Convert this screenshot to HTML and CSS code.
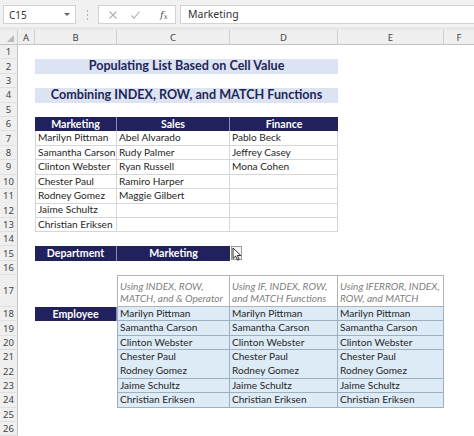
FILE: index.html
```html
<!DOCTYPE html>
<html>
<head>
<meta charset="utf-8">
<link rel="stylesheet" href="styles.css">
</head>
<body>
<div class="formula-bar">
  <div class="namebox"><span class="nb-text">C15</span><span class="caret"></span></div>
  <div class="grip"><i></i><i></i><i></i></div>
  <div class="fx-buttons">
    <svg class="ico" width="10" height="10" viewBox="0 0 10 10"><path d="M1.5 1.5 L8.5 8.5 M8.5 1.5 L1.5 8.5" stroke="#b0b0b0" stroke-width="1.1" fill="none"/></svg>
    <svg class="ico" width="11" height="10" viewBox="0 0 11 10"><path d="M1.5 5.5 L4.2 8.2 L9.5 1.5" stroke="#b0b0b0" stroke-width="1.1" fill="none"/></svg>
    <span class="fx">f<sub>x</sub></span>
  </div>
  <div class="formula-input">Marketing</div>
</div>
<div class="sheet">
  <div class="row colhead">
    <div class="corner"><span class="tri"></span></div>
    <div class="ch">A</div><div class="ch">B</div><div class="ch">C</div><div class="ch">D</div><div class="ch">E</div><div class="ch last">F</div>
  </div>

  <div class="row"><div class="rh">1</div></div>
  <div class="row"><div class="rh">2</div><div class="title span-bd">Populating List Based on Cell Value</div></div>
  <div class="row"><div class="rh">3</div></div>
  <div class="row"><div class="rh">4</div><div class="title span-bd">Combining INDEX, ROW, and MATCH Functions</div></div>
  <div class="row"><div class="rh">5</div></div>
  <div class="row"><div class="rh">6</div><div class="hd b">Marketing</div><div class="hd c">Sales</div><div class="hd d last">Finance</div></div>
  <div class="row"><div class="rh">7</div><div class="t b first">Marilyn Pittman</div><div class="t c">Abel Alvarado</div><div class="t d">Pablo Beck</div></div>
  <div class="row"><div class="rh">8</div><div class="t b first">Samantha Carson</div><div class="t c">Rudy Palmer</div><div class="t d">Jeffrey Casey</div></div>
  <div class="row"><div class="rh">9</div><div class="t b first">Clinton Webster</div><div class="t c">Ryan Russell</div><div class="t d">Mona Cohen</div></div>
  <div class="row"><div class="rh">10</div><div class="t b first">Chester Paul</div><div class="t c">Ramiro Harper</div><div class="t d"></div></div>
  <div class="row"><div class="rh">11</div><div class="t b first">Rodney Gomez</div><div class="t c">Maggie Gilbert</div><div class="t d"></div></div>
  <div class="row"><div class="rh">12</div><div class="t b first">Jaime Schultz</div><div class="t c"></div><div class="t d"></div></div>
  <div class="row"><div class="rh">13</div><div class="t b first">Christian Eriksen</div><div class="t c"></div><div class="t d"></div></div>
  <div class="row"><div class="rh">14</div></div>
  <div class="row"><div class="rh">15</div><div class="hd b">Department</div><div class="hd c last">Marketing</div>
    <div class="d dd-cell">
      <span class="dd-btn"></span>
      <svg class="cursor" width="10" height="14" viewBox="0 0 10 14"><path d="M1 1 L1 11.5 L3.6 9.2 L5.6 13.2 L7.2 12.4 L5.3 8.5 L8.8 8.5 Z" fill="#fff" stroke="#111" stroke-width="0.9" stroke-linejoin="round"/></svg>
    </div>
  </div>
  <div class="row"><div class="rh">16</div></div>
  <div class="row tall"><div class="rh">17</div>
    <div class="h17 c first">Using INDEX, ROW,<br>MATCH, and &amp; Operator</div>
    <div class="h17 d">Using IF, INDEX, ROW,<br>and MATCH Functions</div>
    <div class="h17 e">Using IFERROR, INDEX,<br>ROW, and MATCH</div>
  </div>
  <div class="row"><div class="rh">18</div><div class="hd b">Employee</div><div class="r c first">Marilyn Pittman</div><div class="r d">Marilyn Pittman</div><div class="r e">Marilyn Pittman</div></div>
  <div class="row"><div class="rh">19</div><div class="r c first">Samantha Carson</div><div class="r d">Samantha Carson</div><div class="r e">Samantha Carson</div></div>
  <div class="row"><div class="rh">20</div><div class="r c first">Clinton Webster</div><div class="r d">Clinton Webster</div><div class="r e">Clinton Webster</div></div>
  <div class="row"><div class="rh">21</div><div class="r c first">Chester Paul</div><div class="r d">Chester Paul</div><div class="r e">Chester Paul</div></div>
  <div class="row"><div class="rh">22</div><div class="r c first">Rodney Gomez</div><div class="r d">Rodney Gomez</div><div class="r e">Rodney Gomez</div></div>
  <div class="row"><div class="rh">23</div><div class="r c first">Jaime Schultz</div><div class="r d">Jaime Schultz</div><div class="r e">Jaime Schultz</div></div>
  <div class="row"><div class="rh">24</div><div class="r c first">Christian Eriksen</div><div class="r d">Christian Eriksen</div><div class="r e">Christian Eriksen</div></div>
  <div class="row"><div class="rh">25</div></div>
  <div class="row"><div class="rh">26</div></div>
</div>
</body>
</html>
```

FILE: styles.css
```css
* { box-sizing: border-box; }
html, body { margin: 0; padding: 0; background: #fff; }
body {
  width: 474px; height: 436px; overflow: hidden;
  font-family: Lato, "Noto Sans", sans-serif;
  color: #262626;
}

/* formula bar */
.formula-bar {
  height: 30px;
  background: #f1f1f1;
  display: flex;
  align-items: flex-start;
  padding: 5px 0 0 3px;
  border-bottom: 3px solid #e8e8e8;
}
.namebox {
  width: 73px; height: 19px;
  background: #fff;
  border: 1px solid #d2d2d2;
  display: flex; align-items: center; justify-content: space-between;
  padding: 0 5px 0 5px;
  font-family: "Noto Sans", sans-serif;
  font-size: 10px; color: #333;
}
.caret {
  width: 0; height: 0;
  border-left: 3px solid transparent;
  border-right: 3px solid transparent;
  border-top: 3px solid #666;
}
.grip {
  width: 22px; height: 19px;
  display: flex; flex-direction: column; align-items: center; justify-content: center; gap: 2px;
}
.grip i { display: block; width: 1px; height: 2px; background: #b5b5b5; }
.fx-buttons {
  width: 78px; height: 19px;
  background: #fff;
  border: 1px solid #d2d2d2;
  display: flex; align-items: center;
  padding: 0 0 0 9px;
  gap: 12px;
}
.fx {
  font-family: "DejaVu Serif", "Liberation Serif", serif;
  font-style: italic; font-size: 10px; color: #555;
  margin-left: 7px;
}
.fx sub { font-size: 7px; vertical-align: -1px; }
.formula-input {
  flex: 1; height: 19px; margin-left: 4px;
  background: #fff;
  border: 1px solid #d2d2d2; border-right: none;
  font-family: "Noto Sans", sans-serif;
  font-size: 10.5px; color: #333;
  padding: 0 0 0 7px;
  line-height: 17px;
}

/* sheet */
.sheet { display: flex; flex-direction: column; }
.row {
  display: grid;
  grid-template-columns: 18px 17px 82px 113px 108px 106px 30px;
  height: 14.4px;
  font-size: 10.1px;
}
.row.tall { height: 31.6px; }
.colhead {
  height: 15px;
  background: #efefef;
  border-bottom: 1px solid #c4c4c4;
}
.corner { position: relative; border-right: 1px solid #cfcfcf; }
.tri {
  position: absolute; right: 3px; bottom: 2px;
  width: 0; height: 0;
  border-left: 7px solid transparent;
  border-bottom: 7px solid #b9b9b9;
}
.ch {
  display: flex; align-items: center; justify-content: center;
  font-family: "Noto Sans", sans-serif;
  font-size: 9.5px; color: #444;
  border-right: 1px solid #cfcfcf;
}
.ch.last { border-right: none; }
.rh {
  grid-column: 1;
  background: #efefef;
  border-right: 1px solid #c4c4c4;
  border-bottom: 1px solid #e0e0e0;
  display: flex; align-items: center; justify-content: center;
  font-family: "Noto Sans", sans-serif;
  font-size: 9.5px; color: #444;
  line-height: 13px;
}

.b { grid-column: 3; }
.c { grid-column: 4; }
.d { grid-column: 5; }
.e { grid-column: 6; }
.span-bd { grid-column: 3 / 6; }

.title {
  background: #dce3f3;
  color: #1e2656;
  font-weight: 700;
  font-size: 12.6px;
  text-align: center;
  line-height: 14.4px;
  white-space: nowrap;
}
.hd {
  background: #21215e;
  color: #fff;
  font-weight: 700;
  font-size: 10.6px;
  text-align: center;
  line-height: 14px;
  border-right: 1px solid #8c8cad;
  white-space: nowrap;
}
.hd.last { border-right: none; }
.t {
  border-right: 1px solid #d6d6d6;
  border-bottom: 1px solid #d6d6d6;
  padding-left: 2px;
  line-height: 13.6px;
  white-space: nowrap;
}
.t.first { border-left: 1px solid #d6d6d6; }

.dd-cell { position: relative; }
.dd-btn {
  position: absolute; left: 1px; top: 0;
  width: 11px; height: 14px;
  border: 1px solid #9a9a9a;
  background: #f4f4f4;
}
.cursor { position: absolute; left: 2px; top: 1px; }

.h17 {
  border-top: 1px solid #b3b3b3;
  border-right: 1px solid #b3b3b3;
  border-bottom: 1px solid #b3b3b3;
  font-style: italic;
  color: #808080;
  padding: 0 0 1px 2px;
  line-height: 12.4px;
  display: flex; align-items: flex-end;
  white-space: nowrap;
}
.h17.first { border-left: 1px solid #b3b3b3; }
.r {
  background: #ddebf7;
  border-right: 1px solid #9eafc1;
  border-bottom: 1px solid #9eafc1;
  padding-left: 2px;
  line-height: 13.6px;
  white-space: nowrap;
}
.r.first { border-left: 1px solid #9eafc1; }
```
